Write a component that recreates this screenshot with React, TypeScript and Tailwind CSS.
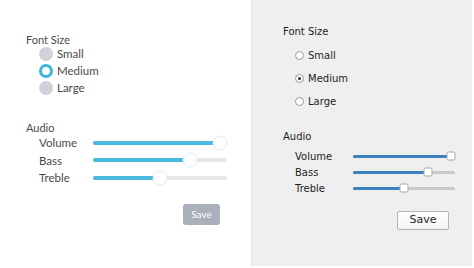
import React, { useState } from "react";

interface SliderSetting {
    name: string;
    value: number;
}

const sizes = ["Small", "Medium", "Large"];

const audio: SliderSetting[] = [
    { name: "Volume", value: 100 },
    { name: "Bass", value: 75 },
    { name: "Treble", value: 50 },
];

// bản "flat" bên trái
const FlatPanel: React.FC<{ size: string; onSize: (s: string) => void }> = ({ size, onSize }) => {
    return (
        <div className="w-[251px] h-full bg-white pl-[26px] pt-[35px] text-[#4a4a4a]" style={{ fontFamily: "Lato, 'Open Sans', sans-serif" }}>
            <div className="text-[11px] leading-[10px]">Font Size</div>
            <div className="ml-[13px]">
                {sizes.map((s) => (
                    <div key={s} className="h-[17px] flex items-center gap-[4px] cursor-pointer" onClick={() => onSize(s)}>
                        {s === size ? (
                            <span className="w-[14px] h-[14px] rounded-full border-[3px] border-[#3db5df] bg-white" />
                        ) : (
                            <span className="w-[14px] h-[14px] rounded-full bg-[#d0d2da]" />
                        )}
                        <span className="text-[11.5px]">{s}</span>
                    </div>
                ))}
            </div>

            <div className="mt-[27px] text-[11px] leading-[10px]">Audio</div>
            <div className="mt-[1px]">
                {audio.map((a) => {
                    const thumb = 7 + (a.value / 100) * 120;
                    return (
                        <div key={a.name} className="h-[17.5px] flex items-center">
                            <span className="w-[67px] pl-[13px] text-[11.5px]">{a.name}</span>
                            <div className="relative w-[134px] h-[4px] rounded-full bg-[#e6e7ea]">
                                <div className="absolute left-0 top-0 h-full rounded-full bg-[#4cb9e1]" style={{ width: thumb }} />
                                <div
                                    className="absolute top-1/2 w-[15px] h-[15px] -translate-x-1/2 -translate-y-1/2 rounded-full bg-white border border-[#e8e8ec]"
                                    style={{ left: thumb }}
                                />
                            </div>
                        </div>
                    );
                })}
            </div>

            <div className="flex justify-end w-[194px] mt-[17px]">
                <button className="w-[37px] h-[21px] rounded-[3px] bg-[#a9b0bb] text-white text-[10px]">Save</button>
            </div>
        </div>
    );
};

// bản "native" bên phải
const NativePanel: React.FC<{ size: string; onSize: (s: string) => void }> = ({ size, onSize }) => {
    return (
        <div
            className="w-[221px] h-[266px] bg-[#efefef] border-l border-[#e2e2e2] pl-[31px] pt-[27px] text-[#1e1e1e]"
            style={{ fontFamily: "'DejaVu Sans', sans-serif" }}
        >
            <div className="text-[10px] leading-[10px]">Font Size</div>
            <div className="mt-[7px] ml-[12px]">
                {sizes.map((s) => (
                    <div key={s} className="h-[23px] flex items-center gap-[4px] cursor-pointer" onClick={() => onSize(s)}>
                        <span className="w-[9px] h-[9px] rounded-full border border-[#9a9a9a] bg-white flex items-center justify-center">
                            {s === size && <span className="w-[3px] h-[3px] rounded-full bg-[#333]" />}
                        </span>
                        <span className="text-[10px]">{s}</span>
                    </div>
                ))}
            </div>

            <div className="mt-[19px] text-[10px] leading-[10px]">Audio</div>
            <div className="mt-[6px] ml-[12px]">
                {audio.map((a) => {
                    const thumb = 4 + (a.value / 100) * 94;
                    return (
                        <div key={a.name} className="h-[16px] flex items-center">
                            <span className="w-[58px] text-[10px]">{a.name}</span>
                            <div className="relative w-[102px] h-[3px] rounded-full bg-[#c9c9c9]">
                                <div className="absolute left-0 top-0 h-full rounded-full bg-[#3a82bf]" style={{ width: thumb }} />
                                <div
                                    className="absolute top-1/2 w-[9px] h-[9px] -translate-x-1/2 -translate-y-1/2 rounded-[2px] bg-white border border-[#a8a8a8]"
                                    style={{ left: thumb }}
                                />
                            </div>
                        </div>
                    );
                })}
            </div>

            <div className="flex justify-end w-[166px] mt-[15px]">
                <button className="w-[52px] h-[19px] rounded-[2px] border border-[#b5b5b5] bg-gradient-to-b from-white to-[#f3f3f3] text-[11px] text-[#1e1e1e]">
                    Save
                </button>
            </div>
        </div>
    );
};

export default function App() {
    const [left, setLeft] = useState("Medium");
    const [right, setRight] = useState("Medium");

    return (
        <div className="w-[474px] h-[268px] bg-white flex">
            <FlatPanel size={left} onSize={setLeft} />
            <NativePanel size={right} onSize={setRight} />
        </div>
    );
}
